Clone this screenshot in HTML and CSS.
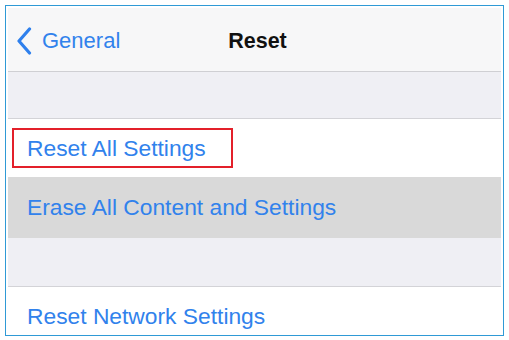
FILE: index.html
```html
<!DOCTYPE html>
<html>
<head>
<meta charset="utf-8">
<link rel="stylesheet" href="styles.css">
</head>
<body>
<div class="frame">
  <div class="screen">
    <header class="nav">
      <div class="back">
        <svg class="chev" width="16" height="28" viewBox="0 0 16 28"><path d="M13.5 2 L3 14 L13.5 26" fill="none" stroke="#2f80ed" stroke-width="3.2" stroke-linecap="round" stroke-linejoin="round"/></svg>
        <span class="back-label">General</span>
      </div>
      <div class="title">Reset</div>
      <div></div>
    </header>
    <div class="gap"></div>
    <div class="row">
      <span class="label">Reset All Settings</span>
      <span class="mark"></span>
    </div>
    <div class="row row-active">
      <span class="label">Erase All Content and Settings</span>
    </div>
    <div class="gap gap-2"></div>
    <div class="row row-last">
      <span class="label">Reset Network Settings</span>
    </div>
  </div>
</div>
</body>
</html>
```
FILE: styles.css
```css
html, body {
  margin: 0;
  padding: 0;
  background: #ffffff;
}
body {
  font-family: "Liberation Sans", Arial, sans-serif;
}
.frame {
  margin: 5px 0 0 5px;
  border: 1px solid #2f9ad6;
  padding: 2px;
  box-sizing: content-box;
  width: 493px;
  height: 325px;
}
.screen {
  width: 100%;
  height: 100%;
  overflow: hidden;
  background: #efeff4;
}
.nav {
  height: 64px;
  box-sizing: border-box;
  padding-top: 3px;
  background: #f7f7f8;
  border-bottom: 1px solid #cfcfd3;
  display: grid;
  grid-template-columns: 1fr auto 1fr;
  align-items: center;
}
.back {
  display: flex;
  align-items: center;
  padding-left: 8px;
  color: #3182ec;
}
.chev {
  display: block;
  margin-right: 10px;
}
.back-label {
  font-size: 22px;
}
.title {
  font-size: 21.5px;
  font-weight: bold;
  color: #111;
  padding-left: 6px;
}
.gap {
  height: 46px;
  border-bottom: 1px solid #d3d3d7;
}
.gap-2 {
  height: 48px;
}
.row {
  position: relative;
  height: 58px;
  background: #ffffff;
  display: flex;
  align-items: center;
  padding-left: 19px;
  font-size: 22.8px;
  color: #3182ec;
}
.row-active {
  height: 61px;
  background: #d9d9d9;
}
.row-last {
  height: 58px;
}
.mark {
  position: absolute;
  left: 4px;
  top: 9px;
  width: 221px;
  height: 40px;
  box-sizing: border-box;
  border: 2px solid #e3202a;
}
```
